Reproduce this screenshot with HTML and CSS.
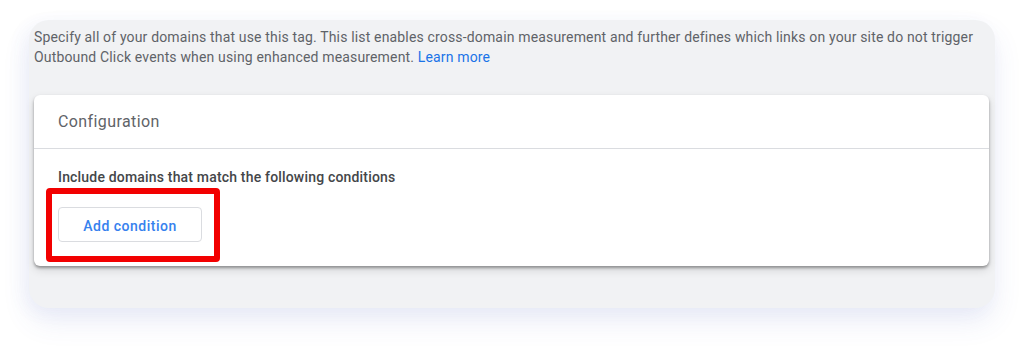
FILE: index.html
```html
<!DOCTYPE html>
<html lang="en">
<head>
<meta charset="utf-8">
<title>Configuration</title>
<link rel="stylesheet" href="styles.css">
</head>
<body>
  <div class="panel">
    <p class="intro">Specify all of your domains that use this tag. This list enables cross-domain measurement and further defines which links on your site do not trigger Outbound Click events when using enhanced measurement. <a class="link" href="#">Learn more</a></p>
    <section class="card">
      <div class="card-header">Configuration</div>
      <div class="card-body">
        <div class="label">Include domains that match the following conditions</div>
        <div class="btn-wrap">
          <button class="btn" type="button">Add condition</button>
          <span class="highlight"></span>
        </div>
      </div>
    </section>
  </div>
</body>
</html>
```

FILE: styles.css
```css
* { box-sizing: border-box; }
html, body { margin: 0; padding: 0; background: #ffffff; }
body {
  font-family: Roboto, "Liberation Sans", Arial, sans-serif;
  width: 1024px;
  height: 347px;
  overflow: hidden;
}
.panel {
  margin: 20px 0 0 29px;
  width: 966px;
  height: 288px;
  background: #f1f2f4;
  border-radius: 20px;
  padding: 7px 6px 0 5px;
  box-shadow: 0 14px 28px rgba(70, 90, 190, 0.10), -6px 4px 18px rgba(70, 90, 190, 0.05);
}
.intro {
  margin: 0;
  font-size: 14px;
  line-height: 20px;
  color: #5f6368;
  letter-spacing: 0.16px;
}
.link { color: #1a73e8; text-decoration: none; }
.card {
  margin-top: 28px;
  background: #fff;
  border-radius: 6px;
  box-shadow: 0 2px 3px rgba(0, 0, 0, 0.35), 0 4px 10px rgba(0, 0, 0, 0.12);
}
.card-header {
  padding: 15px 24px 14px;
  font-size: 16px;
  line-height: 24px;
  letter-spacing: 0.4px;
  color: #5f6368;
  border-bottom: 1px solid #dadce0;
}
.card-body {
  padding: 18px 24px 24px;
}
.label {
  font-size: 14px;
  line-height: 20px;
  font-weight: 500;
  letter-spacing: 0.18px;
  color: #444649;
}
.btn-wrap {
  position: relative;
  display: inline-block;
  margin-top: 20px;
  vertical-align: top;
}
.btn {
  display: block;
  width: 144px;
  height: 35px;
  border: 1px solid #dadce0;
  border-radius: 4px;
  background: #fff;
  color: #3681ee;
  font-family: Roboto, "Liberation Sans", Arial, sans-serif;
  font-size: 14px;
  font-weight: 500;
  letter-spacing: 0.5px;
  padding: 2px 0 0;
}
.highlight {
  position: absolute;
  left: -12px;
  top: -19px;
  right: -18px;
  bottom: -20px;
  border: 6px solid #f20000;
  border-radius: 4px;
  pointer-events: none;
}
```
